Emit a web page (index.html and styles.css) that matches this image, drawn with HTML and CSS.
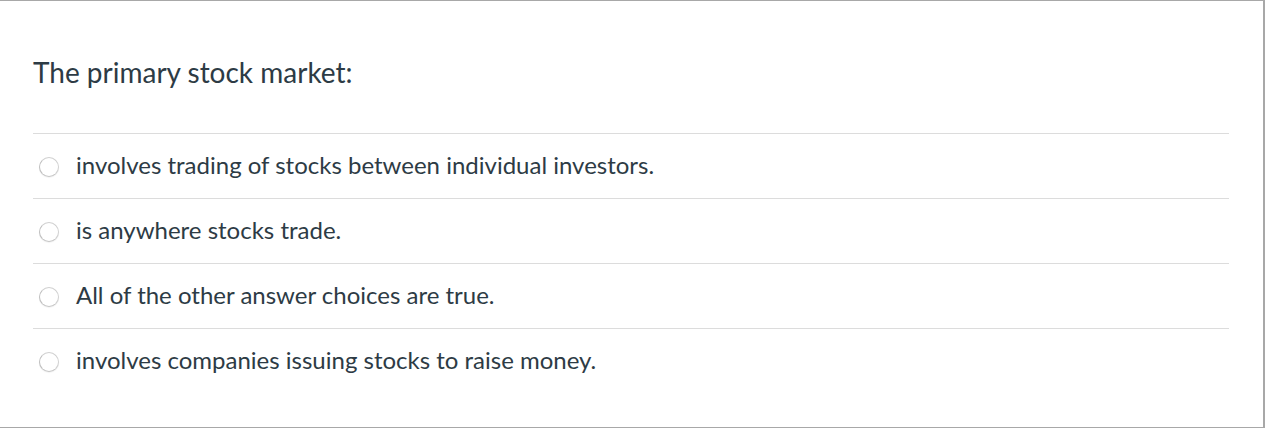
FILE: index.html
```html
<!DOCTYPE html>
<html>
<head>
<meta charset="utf-8">
<link rel="stylesheet" href="styles.css">
</head>
<body>
<div class="question">
  <div class="question-text">The primary stock market:</div>
  <div class="answers">
    <label class="answer"><span class="radio"></span><span class="answer-text">involves trading of stocks between individual investors.</span></label>
    <label class="answer"><span class="radio"></span><span class="answer-text">is anywhere stocks trade.</span></label>
    <label class="answer"><span class="radio"></span><span class="answer-text">All of the other answer choices are true.</span></label>
    <label class="answer"><span class="radio"></span><span class="answer-text">involves companies issuing stocks to raise money.</span></label>
  </div>
</div>
</body>
</html>
```
FILE: styles.css
```css
html, body {
  margin: 0;
  padding: 0;
  background: #fff;
}
body {
  font-family: Lato, "Open Sans", sans-serif;
  color: #2d3b45;
}
.question {
  box-sizing: border-box;
  width: 1265px;
  height: 428px;
  border-top: 1px solid #a8a8a8;
  border-right: 2px solid #a8a8a8;
  border-bottom: 1px solid #a8a8a8;
  padding: 53px 34px 0 33px;
}
.question-text {
  font-size: 28px;
  line-height: 36px;
  margin-bottom: 43px;
}
.answers {
  display: flex;
  flex-direction: column;
}
.answer {
  display: flex;
  align-items: center;
  height: 64px;
  border-top: 1px solid #dcdcdc;
  padding-left: 6px;
}
.radio {
  box-sizing: border-box;
  width: 20px;
  height: 20px;
  border-radius: 50%;
  border: 1px solid #d0d0d0;
  border-left-color: #bdbdbd;
  border-bottom-color: #c4c4c4;
  box-shadow: 0 1px 1px rgba(0,0,0,0.05);
  background: #fff;
  flex: none;
  margin-top: 2px;
  margin-right: 17px;
}
.answer-text {
  font-size: 24px;
  line-height: 30px;
  margin-bottom: 2px;
}
```
